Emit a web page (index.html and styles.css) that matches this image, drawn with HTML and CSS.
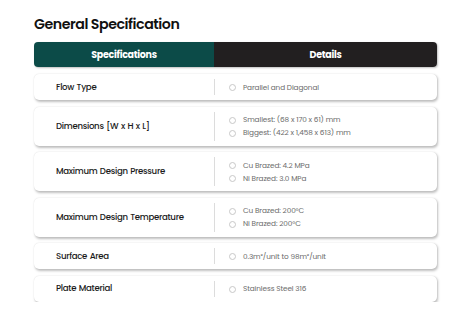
FILE: index.html
```html
<!DOCTYPE html>
<html>
<head>
<meta charset="utf-8">
<link rel="stylesheet" href="styles.css">
</head>
<body>
<div class="page">
  <h1 class="title">General Specification</h1>
  <div class="head">
    <div class="head-spec">Specifications</div>
    <div class="head-det">Details</div>
  </div>
  <div class="rows">
    <div class="row r-short">
      <div class="label">Flow Type</div>
      <div class="sep"></div>
      <ul class="details"><li>Parallel and Diagonal</li></ul>
    </div>
    <div class="row r-tall">
      <div class="label">Dimensions [W x H x L]</div>
      <div class="sep"></div>
      <ul class="details"><li>Smallest: (68 x 170 x 61) mm</li><li>Biggest: (422 x 1,458 x 613) mm</li></ul>
    </div>
    <div class="row r-tall">
      <div class="label">Maximum Design Pressure</div>
      <div class="sep"></div>
      <ul class="details"><li>Cu Brazed: 4.2 MPa</li><li>Ni Brazed: 3.0 MPa</li></ul>
    </div>
    <div class="row r-tall">
      <div class="label">Maximum Design Temperature</div>
      <div class="sep"></div>
      <ul class="details"><li>Cu Brazed: 200°C</li><li>Ni Brazed: 200°C</li></ul>
    </div>
    <div class="row r-short">
      <div class="label">Surface Area</div>
      <div class="sep"></div>
      <ul class="details"><li>0.3m²/unit to 98m²/unit</li></ul>
    </div>
    <div class="row r-short">
      <div class="label">Plate Material</div>
      <div class="sep"></div>
      <ul class="details"><li>Stainless Steel 316</li></ul>
    </div>
  </div>
</div>
</body>
</html>
```
FILE: styles.css
```css
html, body { margin: 0; padding: 0; background: #fff; }
body { font-family: "Poppins", "Open Sans", "DejaVu Sans", sans-serif; color: #1d1d1d; }
.page { padding: 14px 0 0 34px; width: 403px; }
.title { margin: 0 0 7px 0; font-size: 14.2px; line-height: 21px; font-weight: 600; color: #111; letter-spacing: -0.45px; }
.head { display: flex; height: 25px; border-radius: 4px; overflow: hidden; box-shadow: 1px 1px 2px rgba(0,0,0,0.25); }
.head-spec { width: 180px; background: #0c4b48; color: #fff; font-size: 9.5px; font-weight: 700; letter-spacing: -0.3px; display: flex; align-items: center; justify-content: center; }
.head-det { flex: 1; background: #221f20; color: #fff; font-size: 9.5px; font-weight: 700; letter-spacing: -0.3px; display: flex; align-items: center; justify-content: center; }
.rows { display: flex; flex-direction: column; gap: 6.5px; margin-top: 7px; }
.row { display: flex; align-items: center; background: #fff; border-radius: 5px; box-shadow: 1px 1.5px 2.5px rgba(0,0,0,0.25), 0 0 1px rgba(0,0,0,0.12); }
.r-short { height: 26px; }
.r-tall { height: 39px; }
.label { width: 158px; padding-left: 22px; font-size: 8.6px; font-weight: 500; letter-spacing: -0.3px; word-spacing: 0.6px; color: #1b1b1b; }
.sep { width: 1px; align-self: stretch; margin: 5px 0; background: #dcdcdc; }
.details { list-style: none; margin: 0; padding: 0 0 0 14px; display: flex; flex-direction: column; gap: 4px; }
.details li { position: relative; padding-left: 14px; font-size: 7.3px; line-height: 9px; letter-spacing: -0.1px; color: #6a6a6a; }
.details li::before { content: ""; position: absolute; left: 0; top: 1.5px; width: 5px; height: 5px; border: 1px solid #c8c8c8; border-radius: 50%; }
```
